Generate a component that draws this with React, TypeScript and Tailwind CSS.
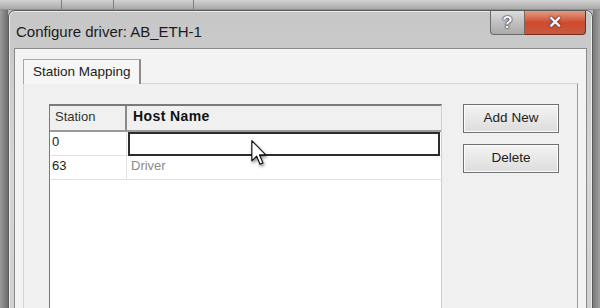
import React from 'react';

const font = { fontFamily: '"Liberation Sans", Arial, sans-serif' };

type Row = { station: string; host: string; editing?: boolean };

const rows: Row[] = [
  { station: '0', host: '', editing: true },
  { station: '63', host: 'Driver' },
];

function Cursor() {
  return (
    <svg
      className="absolute left-[251px] top-[140px]"
      width="16"
      height="26"
      viewBox="0 0 12 20"
      style={{ filter: 'drop-shadow(1px 2px 1.5px rgba(0,0,0,0.45))' }}
    >
      <path
        d="M0.5 0.5 L0.5 16 L4.2 12.4 L6.8 18.6 L9 17.6 L6.4 11.5 L11.2 11.5 Z"
        fill="#ffffff"
        stroke="#111111"
        strokeWidth="0.9"
        strokeLinejoin="round"
      />
    </svg>
  );
}

function WinButton({ children }: { children: React.ReactNode }) {
  return (
    <button
      type="button"
      className="h-[29px] w-[96px] border border-[#707070] bg-gradient-to-b from-[#f4f4f4] to-[#dcdcdc] text-[13.5px] text-[#222] shadow-[inset_0_0_0_1px_#fcfcfc]"
      style={font}
    >
      {children}
    </button>
  );
}

export default function App() {
  return (
    <div className="relative h-[308px] w-[600px] overflow-hidden bg-[#b9b9b9]" style={font}>
      {/* window behind */}
      <div className="flex h-[10px] border-b border-[#8d8d8d] bg-gradient-to-b from-[#d2d2d2] to-[#a9a9a9]">
        <div className="w-[62px] border-r border-[#7d7d7d]" />
        <div className="w-[52px] border-r border-[#7d7d7d]" />
        <div className="w-[80px] border-r border-[#7d7d7d]" />
      </div>
      <div className="absolute left-0 top-[10px] h-[298px] w-[8px] bg-gradient-to-r from-[#9c9c9c] to-[#6c6c6c]" />
      <div className="absolute right-0 top-[10px] h-[298px] w-[7px] bg-gradient-to-r from-[#7a7a7a] to-[#a0a0a0]" />

      {/* dialog */}
      <div className="absolute left-[8px] top-[10px] flex h-[310px] w-[585px] flex-col rounded-t-[7px] border border-[#5c5c5c] bg-gradient-to-b from-[#c6c6c6] via-[#d6d6d6] to-[#d0d0d0] px-[5px] shadow-[inset_0_0_0_1px_#ececec]">
        <div className="flex h-[37px] shrink-0 items-start justify-between">
          <div className="pl-[2px] pt-[11px] text-[15px] leading-[20px] text-[#1b1b1b]">
            Configure driver: AB_ETH-1
          </div>
          <div className="mr-[1px] flex h-[24px]">
            <div className="flex w-[35px] items-center justify-center rounded-bl-[4px] border border-t-0 border-[#6a6a6a] bg-gradient-to-b from-[#dcdcdc] via-[#c0c0c0] to-[#aaaaaa] text-[17px] font-bold text-[#fafafa] [text-shadow:0_0_2px_#111,0_0_1px_#111]">
              ?
            </div>
            <div className="flex w-[61px] items-center justify-center rounded-br-[4px] border border-l-0 border-t-0 border-[#7a2a1a] bg-gradient-to-b from-[#e39a86] via-[#cf4a2c] to-[#c65a40] text-[17px] font-bold text-[#f5f5f5] [text-shadow:0_0_2px_#3a140c,0_0_1px_#3a140c]">
              ✕
            </div>
          </div>
        </div>

        <div className="flex flex-1 flex-col border border-b-0 border-[#8a8a8a] bg-[#f3f3f3] px-[8px] pt-[9px]">
          {/* tab strip */}
          <div className="flex h-[25px] shrink-0">
            <div className="relative top-[1px] flex w-[118px] items-center border border-b-0 border-r-2 border-[#a8a8a8] border-r-[#8c8c8c] bg-[#f6f6f6] pl-[9px] text-[13.5px] text-[#222]">
              Station Mapping
            </div>
          </div>

          {/* tab page */}
          <div className="flex flex-1 border border-b-0 border-[#d6d6d6] border-r-[#9a9a9a] bg-[#f0f0f0] pl-[25px] pr-[17px] pt-[20px]">
            <div className="w-[393px] border-l border-t-2 border-r border-[#7a7a7a] border-r-[#cfcfcf] bg-white">
              <div className="flex h-[26px] border-b-2 border-[#9a9a9a] bg-[#f0f0f0] text-[13px] leading-[16px]">
                <div className="w-[77px] border-r-2 border-[#8a8a8a] pl-[5px] pt-[3px] text-[#333]">Station</div>
                <div className="flex-1 pl-[6px] pt-[2px] text-[14px] font-bold tracking-[0.4px] text-[#111]">
                  Host Name
                </div>
              </div>
              {rows.map((r) => (
                <div key={r.station} className="flex h-[24px] border-b border-[#e2e2e2] text-[13px] leading-[16px]">
                  <div className="w-[77px] border-r border-[#e2e2e2] pl-[2px] pt-[2px] text-[#222]">{r.station}</div>
                  {r.editing ? (
                    <div className="ml-[1px] mr-[1px] h-[24px] flex-1 border-2 border-[#2c2c2c] bg-white" />
                  ) : (
                    <div className="flex-1 pl-[4px] pt-[2px] text-[#8a8a8a]">{r.host}</div>
                  )}
                </div>
              ))}
            </div>

            <div className="ml-[21px] flex flex-col gap-[11px]">
              <WinButton>Add New</WinButton>
              <WinButton>Delete</WinButton>
            </div>
          </div>
        </div>
      </div>

      <Cursor />
    </div>
  );
}
